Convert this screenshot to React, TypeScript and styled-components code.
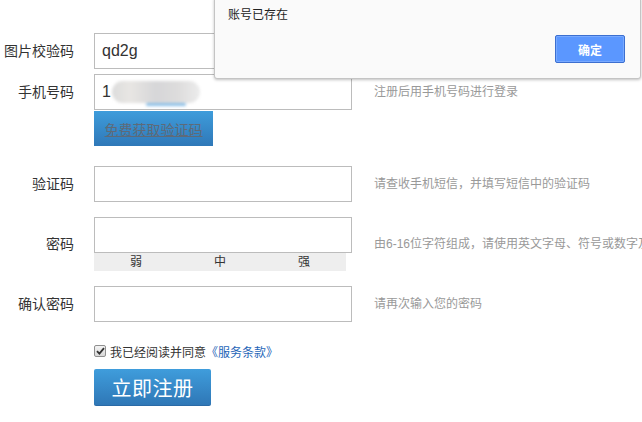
import React from "react";
import styled, { createGlobalStyle } from "styled-components";

const Global = createGlobalStyle`
  html, body { margin: 0; padding: 0; background: #fff; }
  body { font-family: "Liberation Sans", "Noto Sans CJK SC", sans-serif; color: #333; }
`;

const Page = styled.div`
  position: relative;
  width: 642px;
  height: 422px;
  overflow: hidden;
`;

const Form = styled.div`
  display: flex;
  flex-direction: column;
  padding-top: 33px;
`;

const Row = styled.div<{ $mt?: number }>`
  display: grid;
  grid-template-columns: 74px 258px auto;
  column-gap: 20px;
  align-items: center;
  margin-top: ${(p) => p.$mt ?? 0}px;
`;

const Label = styled.div`
  font-size: 14px;
  line-height: 18px;
  text-align: right;
  color: #333;
  white-space: nowrap;
`;

const Field = styled.div`
  box-sizing: border-box;
  height: 36px;
  border: 1px solid #bcbcbc;
  background: #fff;
  display: flex;
  align-items: center;
  padding-left: 7px;
  font-size: 16px;
  color: #333;
  position: relative;
`;

const Blur = styled.span`
  display: inline-block;
  width: 88px;
  height: 22px;
  margin-left: 1px;
  border-radius: 11px;
  background: linear-gradient(90deg, #dcdcdc, #e8e6e3 20%, #d6d6d8 50%, #dddcdc 75%, #ececec);
  filter: blur(1.5px);
  position: relative;
  &::after {
    content: "";
    position: absolute;
    left: 34px;
    bottom: -3px;
    width: 40px;
    height: 3px;
    background: #8cc0e8;
    border-radius: 2px;
  }
`;

const Hint = styled.div`
  font-size: 12px;
  line-height: 16px;
  color: #999;
  white-space: nowrap;
  padding-left: 2px;
`;

const PhoneGrid = styled.div`
  display: grid;
  grid-template-columns: 74px 258px auto;
  grid-template-rows: 36px auto;
  column-gap: 20px;
  row-gap: 1px;
  align-items: center;
  margin-top: 5px;
`;

const CodeButton = styled.div`
  grid-column: 2;
  width: 119px;
  height: 35px;
  box-sizing: border-box;
  background: linear-gradient(#3e9cdb, #2f78b8);
  display: flex;
  align-items: center;
  justify-content: center;
  font-size: 14px;
  color: #5e6a78;
  text-decoration: underline;
`;

const PwdStack = styled.div`
  display: flex;
  flex-direction: column;
`;

const Strength = styled.div`
  display: grid;
  grid-template-columns: repeat(3, 84px);
  height: 18px;
  width: 252px;
  background: #eeeeee;
`;

const StrengthCell = styled.div`
  font-size: 12px;
  line-height: 18px;
  text-align: center;
  color: #333;
`;

const AgreeRow = styled.div`
  display: flex;
  align-items: center;
  gap: 4px;
  margin: 22px 0 0 94px;
  height: 14px;
  font-size: 12px;
  color: #333;
`;

const Check = styled.span`
  box-sizing: border-box;
  width: 12px;
  height: 12px;
  border: 1px solid #8f8f8f;
  border-radius: 2px;
  background: linear-gradient(#f4f4f4, #d8d8d8);
  display: flex;
  align-items: center;
  justify-content: center;
`;

const Link = styled.span`
  color: #1f66b8;
`;

const Submit = styled.div`
  margin: 11px 0 0 94px;
  width: 117px;
  height: 37px;
  box-sizing: border-box;
  border-radius: 2px;
  border-bottom: 1px solid #2a6aa6;
  background: linear-gradient(#3f9ddc, #2f77b6);
  color: #fff;
  font-size: 20px;
  display: flex;
  align-items: center;
  justify-content: center;
  letter-spacing: 0.5px;
`;

const Dialog = styled.div`
  position: absolute;
  top: -2px;
  left: 214px;
  width: 427px;
  height: 81px;
  box-sizing: border-box;
  background: #fafafa;
  border: 1px solid #c4c4c4;
  border-radius: 0 0 3px 3px;
  box-shadow: 0 1px 3px rgba(0, 0, 0, 0.25);
  display: flex;
  flex-direction: column;
  padding: 8px 15px 0 13px;
`;

const DialogText = styled.div`
  font-size: 12px;
  line-height: 16px;
  color: #222;
`;

const DialogActions = styled.div`
  display: flex;
  justify-content: flex-end;
  margin-top: 12px;
`;

const OkButton = styled.div`
  box-sizing: border-box;
  width: 70px;
  height: 28px;
  border: 1px solid #3c6fd0;
  border-radius: 2px;
  background: #5b97ff;
  box-shadow: inset 0 0 0 1px #79aaff;
  color: #fff;
  font-size: 12px;
  font-weight: bold;
  display: flex;
  align-items: center;
  justify-content: center;
`;

export default function App() {
  return (
    <Page>
      <Global />
      <Form>
        <Row>
          <Label>图片校验码</Label>
          <Field>qd2g</Field>
          <Hint />
        </Row>
        <PhoneGrid>
          <Label>手机号码</Label>
          <Field>
            1<Blur />
          </Field>
          <Hint>注册后用手机号码进行登录</Hint>
          <CodeButton>免费获取验证码</CodeButton>
        </PhoneGrid>
        <Row $mt={20}>
          <Label>验证码</Label>
          <Field />
          <Hint>请查收手机短信，并填写短信中的验证码</Hint>
        </Row>
        <Row $mt={15}>
          <Label>密码</Label>
          <PwdStack>
            <Field />
            <Strength>
              <StrengthCell>弱</StrengthCell>
              <StrengthCell>中</StrengthCell>
              <StrengthCell>强</StrengthCell>
            </Strength>
          </PwdStack>
          <Hint>由6-16位字符组成，请使用英文字母、符号或数字及组合</Hint>
        </Row>
        <Row $mt={15}>
          <Label>确认密码</Label>
          <Field />
          <Hint>请再次输入您的密码</Hint>
        </Row>
        <AgreeRow>
          <Check>
            <svg width="9" height="8" viewBox="0 0 9 8">
              <path d="M1 4.2 L3.4 6.6 L8 1.2" fill="none" stroke="#333" strokeWidth="1.8" />
            </svg>
          </Check>
          <span>
            我已经阅读并同意<Link>《服务条款》</Link>
          </span>
        </AgreeRow>
        <Submit>立即注册</Submit>
      </Form>
      <Dialog>
        <DialogText>账号已存在</DialogText>
        <DialogActions>
          <OkButton>确定</OkButton>
        </DialogActions>
      </Dialog>
    </Page>
  );
}
